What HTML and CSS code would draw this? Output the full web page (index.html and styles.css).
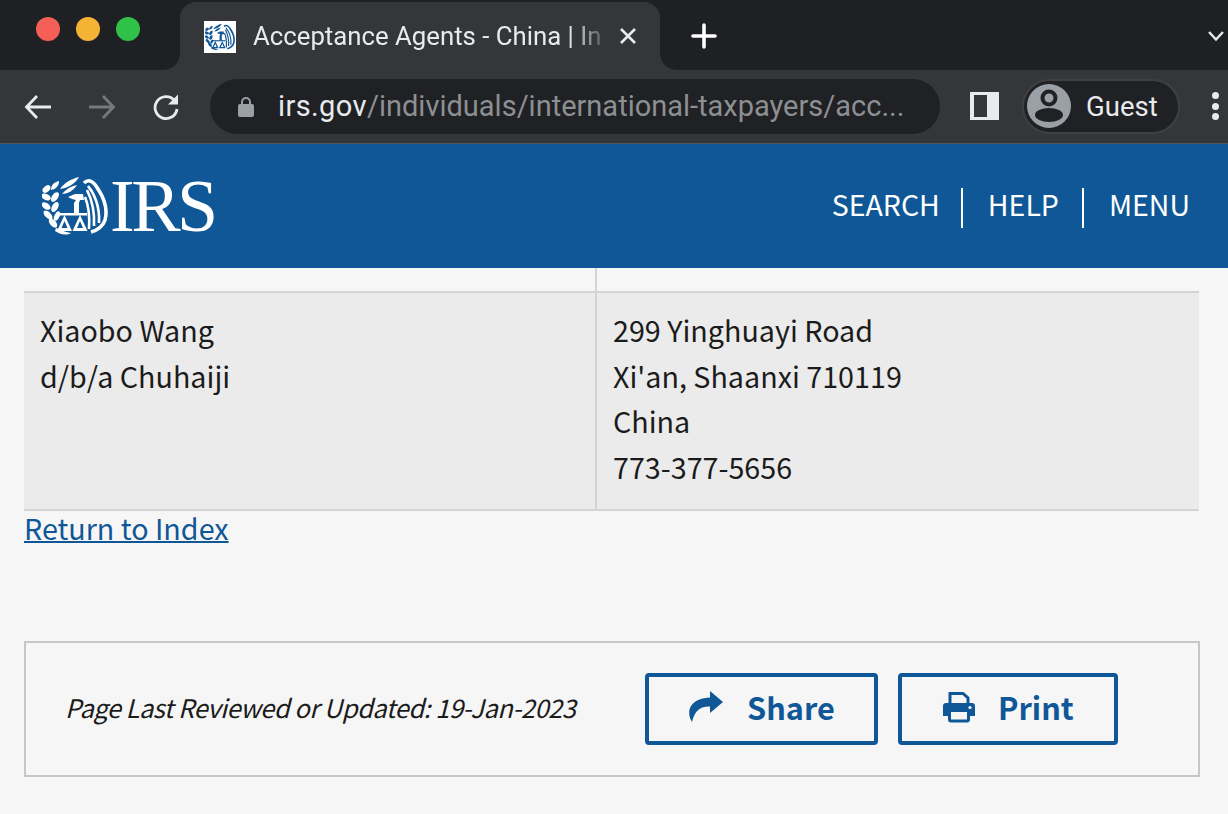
FILE: index.html
```html
<!DOCTYPE html>
<html lang="en">
<head>
<meta charset="utf-8">
<title>Acceptance Agents - China | Internal Revenue Service</title>
<link rel="stylesheet" href="styles.css">
</head>
<body>
<svg class="defs" width="0" height="0" aria-hidden="true">
  <symbol id="emblem" viewBox="0 0 66 60">
    <g fill="currentColor">
      <path d="M18 13C22 7 29 3 37 1 33 8 26 12 18 13Z"/>
      <path d="M20 18C24 13 29 10 35 9 32 14 26 18 20 18Z"/>
      <path d="M9 14C9 9 12 6 17 5 17 10 14 13 9 14Z"/>
      <ellipse cx="4.500" cy="13" rx="4.500" ry="3" transform="rotate(-40 4.500 13)"/>
      <ellipse cx="4" cy="21" rx="5" ry="3" transform="rotate(25 4 21)"/>
      <ellipse cx="13" cy="21" rx="5.500" ry="3" transform="rotate(-55 13 21)"/>
      <ellipse cx="4" cy="30" rx="5" ry="3" transform="rotate(35 4 30)"/>
      <ellipse cx="13" cy="31" rx="5.500" ry="3" transform="rotate(-60 13 31)"/>
      <ellipse cx="6" cy="39" rx="5.500" ry="3" transform="rotate(45 6 39)"/>
      <ellipse cx="15" cy="40" rx="5" ry="2.600" transform="rotate(-65 15 40)"/>
      <ellipse cx="11" cy="47" rx="5.500" ry="3" transform="rotate(50 11 47)"/>
      <path d="M14 52C18 53 22 56 29 57 24 60 17 58 13 55Z"/>
      <path d="M26 21L33 18 41 18 42 24 38 24 37 27V37H32V27L34 24 30 23Z"/>
      <path d="M17 37H45V39.500H17Z"/>
      <path fill-rule="evenodd" d="M22.500 39L30 55H15ZM22.500 45L19.500 52H25.500Z"/>
      <path fill-rule="evenodd" d="M38 39L45.500 55H30.500ZM38 45L35 52H41Z"/>
    </g>
    <g fill="none" stroke="currentColor">
      <path stroke-width="3.600" d="M42 7C47 2 52 6 56 13 62 22 66 33 63 44 61 50 56 54 49 56"/>
      <path stroke-width="2.600" d="M46 10C52 17 58 30 57 47"/>
      <path stroke-width="2.600" d="M45 14C49 22 53 33 52 50"/>
      <path stroke-width="2.600" d="M43 21C46 28 48 38 47 53"/>
    </g>
  </symbol>
</svg>

<header class="chrome">
  <div class="tabstrip">
    <div class="lights">
      <span class="light light-red"></span>
      <span class="light light-yellow"></span>
      <span class="light light-green"></span>
    </div>
    <div class="tab">
      <span class="favicon"><svg width="30" height="28"><use href="#emblem"/></svg></span>
      <span class="tab-title">Acceptance Agents - China | In</span>
      <svg class="tab-close" width="18" height="18" viewBox="0 0 18 18"><path d="M2 2L16 16M16 2L2 16" stroke="#e8eaed" stroke-width="2.600" fill="none"/></svg>
    </div>
    <svg class="newtab" width="26" height="26" viewBox="0 0 26 26"><path d="M13 2V24M2 13H24" stroke="#fff" stroke-width="3.600" stroke-linecap="round" fill="none"/></svg>
    <svg class="tabmenu" width="18" height="12" viewBox="0 0 18 12"><path d="M2 2L9 9.500 16 2" stroke="#e8eaed" stroke-width="2.400" fill="none"/></svg>
  </div>
  <div class="toolbar">
    <svg class="nav" width="28" height="28" viewBox="0 0 28 28"><path d="M27 14H3M13 3L2.500 14 13 25" fill="none" stroke="#e8eaed" stroke-width="2.800"/></svg>
    <svg class="nav" width="28" height="28" viewBox="0 0 28 28"><path d="M1 14H25M15 3L25.500 14 15 25" fill="none" stroke="#77787b" stroke-width="2.800"/></svg>
    <svg class="nav" width="28" height="28" viewBox="0 0 28 28"><path d="M22.500 7.500A11 11 0 1 0 25 16" fill="none" stroke="#e8eaed" stroke-width="2.800"/><path d="M26 1.500V11.500H16Z" fill="#e8eaed"/></svg>
    <div class="omnibox">
      <svg class="lock" width="16" height="21" viewBox="0 0 16 21"><path d="M4 9V6a4 4 0 0 1 8 0V9" fill="none" stroke="#9aa0a6" stroke-width="2"/><rect y="8" width="16" height="13" rx="2" fill="#9aa0a6"/></svg>
      <span class="url"><span class="url-host">irs.gov</span>/individuals/international-taxpayers/acc...</span>
    </div>
    <svg class="panel" width="29" height="28" viewBox="0 0 29 28"><path fill="#e8eaed" fill-rule="evenodd" d="M0 0H29V28H0ZM4 3V25H17V3Z"/></svg>
    <div class="profile">
      <svg width="44" height="44" viewBox="0 0 44 44"><defs><clipPath id="avatar-clip"><circle cx="22" cy="22" r="22"/></clipPath></defs><circle cx="22" cy="22" r="22" fill="#9aa0a6"/><g clip-path="url(#avatar-clip)"><circle cx="22" cy="14" r="6.500" fill="#9aa0a6" stroke="#202124" stroke-width="4"/><ellipse cx="22" cy="31" rx="14" ry="7" fill="#202124"/></g></svg>
      <span class="profile-name">Guest</span>
    </div>
    <div class="dots"><span></span><span></span><span></span></div>
  </div>
</header>

<div class="site-header">
  <a class="logo" href="#"><svg class="logo-emblem" width="66" height="60"><use href="#emblem"/></svg><span class="logo-text">IRS</span></a>
  <nav class="site-nav">
    <a href="#">SEARCH</a>
    <a href="#">HELP</a>
    <a href="#">MENU</a>
  </nav>
</div>

<main class="content">
  <table class="agents">
    <tr class="row-prev"><td></td><td></td></tr>
    <tr class="row">
      <td>Xiaobo Wang<br>d/b/a Chuhaiji</td>
      <td>299 Yinghuayi Road<br>Xi'an, Shaanxi 710119<br>China<br>773-377-5656</td>
    </tr>
  </table>
  <a class="return" href="#">Return to Index</a>
  <section class="review">
    <em class="review-date">Page Last Reviewed or Updated: 19-Jan-2023</em>
    <a class="btn btn-share" href="#">
      <svg width="34" height="34" viewBox="0 0 34 34"><path fill="currentColor" d="M21 1L34 12 21 23V16.500C13 16 6 19 3 32 0 27-1 21 2 16 6 10 13 8 21 7.500Z"/></svg>
      <span>Share</span>
    </a>
    <a class="btn btn-print" href="#">
      <svg width="32" height="32" viewBox="0 0 32 32"><path fill="none" stroke="currentColor" stroke-width="3" d="M7 13V2.500H20L25 7V13"/><path fill="currentColor" d="M3 12H29a3 3 0 0 1 3 3V25H0V15a3 3 0 0 1 3-3Z"/><rect x="6.500" y="19.500" width="19" height="10.500" rx="1.500" fill="#f6f6f6" stroke="currentColor" stroke-width="3"/><circle cx="27" cy="16.500" r="1.600" fill="#f6f6f6"/></svg>
      <span>Print</span>
    </a>
  </section>
</main>
</body>
</html>
```
FILE: styles.css
```css
* { box-sizing: border-box; }
html, body { margin: 0; height: 814px; overflow: hidden; }
body { background: #f6f6f6; font-family: "Noto Sans CJK SC", "Noto Sans", sans-serif; color: #1b1b1b; }
a { color: inherit; }
.defs { display: block; position: absolute; }

/* browser chrome */
.chrome { font-family: Roboto, "Liberation Sans", sans-serif; }
.tabstrip { height: 70px; background: #1f2024; display: flex; align-items: flex-end; }
.lights { align-self: flex-start; display: flex; gap: 16px; width: 144px; margin: 17px 0 0 36px; }
.light { width: 24px; height: 24px; border-radius: 50%; }
.light-red { background: #f45f58; }
.light-yellow { background: #f5b335; }
.light-green { background: #30c148; }
.tab { position: relative; width: 480px; height: 68px; background: #35363a; border-radius: 16px 16px 0 0; display: flex; align-items: center; padding: 0 0 0 24px; }
.tab::before, .tab::after { content: ""; position: absolute; bottom: 0; width: 16px; height: 16px; }
.tab::before { left: -16px; background: radial-gradient(circle at 0 0, transparent 15.500px, #35363a 16px); }
.tab::after { right: -16px; background: radial-gradient(circle at 100% 0, transparent 15.500px, #35363a 16px); }
.favicon { width: 32px; height: 32px; background: #fff; color: #0f5796; display: flex; align-items: center; justify-content: center; flex: none; margin-top: 2px; }
.tab-title { margin-left: 17px; width: 350px; flex: none; overflow: hidden; white-space: nowrap; color: #e8eaed; font-size: 25.750px; -webkit-mask-image: linear-gradient(90deg, #000 90%, rgba(0,0,0,.2) 100%); mask-image: linear-gradient(90deg, #000 90%, rgba(0,0,0,.2) 100%); }
.tab-close { margin-left: 16px; flex: none; }
.newtab { margin: 0 0 21px 31px; flex: none; }
.tabmenu { margin: 0 3px 28px auto; flex: none; }
.toolbar { height: 74px; background: #35363a; border-bottom: 1px solid #56575a; display: flex; align-items: center; padding-left: 24px; }
.nav { flex: none; margin-right: 36px; }
.nav:nth-child(3) { margin-right: 30px; }
.omnibox { width: 730px; height: 55px; margin-top: -1px; background: #202124; border-radius: 28px; display: flex; align-items: center; padding-left: 28px; flex: none; }
.lock { flex: none; }
.url { margin-left: 24px; font-size: 29px; color: #8d8f93; white-space: nowrap; }
.url-host { color: #e8eaed; letter-spacing: .4px; }
.panel { flex: none; margin: -1px 0 0 30px; }
.profile { flex: none; width: 158px; height: 55px; margin: -1px 0 0 23px; border: 2px solid #3f4044; border-radius: 28px; background: #202124; display: flex; align-items: center; padding-left: 3px; }
.profile-name { margin-left: 15px; font-size: 27.500px; color: #e8eaed; }
.dots { flex: none; margin: -1px 0 0 32px; display: flex; flex-direction: column; gap: 3.500px; }
.dots span { width: 7px; height: 7px; background: #e8eaed; border-radius: 50%; }

/* site header */
.site-header { height: 124px; background: #0f5796; color: #fff; display: flex; align-items: center; justify-content: space-between; padding: 0 38px 0 42px; }
.logo { display: flex; align-items: center; text-decoration: none; }
.logo-emblem { flex: none; margin-top: -1px; }
.logo-text { font-family: "Liberation Serif", serif; font-size: 74px; line-height: 60px; letter-spacing: -3.500px; margin-left: 2px; }
.site-nav { display: flex; align-items: center; }
.site-nav a { display: block; height: 40px; line-height: 32px; font-size: 28.500px; text-decoration: none; padding: 0 21px 0 25px; border-right: 2px solid #fff; margin-top: 4px; }
.site-nav a:nth-child(2) { padding-right: 23px; }
.site-nav a:last-child { border-right: 0; padding-right: 0; }

/* content */
.content { padding: 0 28px 0 24px; }
.agents { width: 1175px; border-collapse: collapse; table-layout: fixed; }
.agents td { vertical-align: top; padding: 0; }
.agents td:first-child { width: 572px; }
.agents td + td { border-left: 2px solid #d4d4d4; }
.row-prev td { height: 24px; }
.row td { background: #ebebeb; border-top: 2px solid #d4d4d4; border-bottom: 2px solid #d4d4d4; height: 218px; padding: 14px 16px; font-size: 28.700px; line-height: 45.700px; }
.return { display: block; width: max-content; margin-top: 0; color: #0f5796; font-size: 28.700px; line-height: 33px; text-decoration-thickness: 2px; }
.review { margin-top: 97px; height: 136px; border: 2px solid #c6c6c6; display: flex; align-items: center; padding-left: 39px; }
.review-date { width: 580px; flex: none; font-size: 25.500px; letter-spacing: -.5px; white-space: nowrap; margin-bottom: 5px; }
.btn { height: 72px; border: 4px solid #0f5796; border-radius: 4px; color: #0f5796; display: flex; align-items: center; text-decoration: none; font-weight: 700; font-size: 30.700px; flex: none; padding-bottom: 5px; }
.btn-share { width: 233px; padding-left: 40px; gap: 24px; }
.btn-print { width: 220px; padding-left: 41px; gap: 23px; margin-left: 20px; }
```
